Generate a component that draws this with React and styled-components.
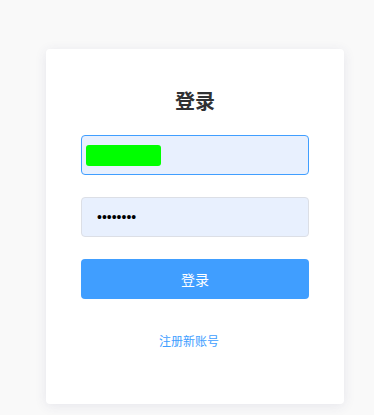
import React from "react";
import styled, { createGlobalStyle } from "styled-components";

const GlobalStyle = createGlobalStyle`
    html, body {
        margin: 0;
        padding: 0;
        background: #f9f9f9;
        font-family: "Noto Sans CJK SC", "Noto Sans", "Liberation Sans", sans-serif;
    }
`

export const Page = styled.div`
    width: 374px;
    height: 415px;
    padding: 49px 0 0 46px;
    box-sizing: border-box;
    overflow: hidden;
`

export const Card = styled.div`
    width: 298px;
    height: 355px;
    box-sizing: border-box;
    padding: 38px 35px 0 35px;
    background: #fff;
    border-radius: 4px;
    box-shadow: 0 2px 12px rgba(60, 60, 120, 0.1);
    display: flex;
    flex-direction: column;
`

export const Title = styled.h2`
    margin: 0 0 20px 0;
    font-size: 20px;
    line-height: 28px;
    font-weight: bold;
    color: #303133;
    text-align: center;
`

export const Field = styled.div`
    position: relative;
    margin-bottom: ${props => props.gap}px;
`

export const Input = styled.input`
    width: 100%;
    height: 40px;
    box-sizing: border-box;
    padding: 0 15px;
    border: 1px solid ${props => props.focused ? "#409eff" : "#dcdfe6"};
    border-radius: 4px;
    background: #e8f0fe;
    font-size: 14px;
    color: #000;
    outline: none;
    font-family: "Liberation Sans", Arial, sans-serif;
`

export const Mask = styled.div`
    position: absolute;
    left: 5px;
    top: 10px;
    width: 75px;
    height: 21px;
    border-radius: 3px;
    background: #00ff00;
`

export const Button = styled.button`
    width: 100%;
    height: 40px;
    border: none;
    border-radius: 4px;
    background: #409eff;
    color: #fff;
    font-size: 14px;
    font-family: inherit;
    cursor: pointer;
`

export const Footer = styled.div`
    margin-top: 33px;
    padding-right: 12px;
    font-size: 12px;
    line-height: 17px;
    text-align: center;
`

export const Link = styled.a`
    color: #409eff;
    text-decoration: none;
`

export default class App extends React.Component {
    render() {
        return (
            <>
                <GlobalStyle />
                <Page>
                    <Card>
                        <Title>登录</Title>
                        <Field gap={22}>
                            <Input focused type="text" defaultValue="" />
                            <Mask />
                        </Field>
                        <Field gap={22}>
                            <Input type="password" defaultValue="12345678" />
                        </Field>
                        <Button>登录</Button>
                        <Footer>
                            <Link href="#">注册新账号</Link>
                        </Footer>
                    </Card>
                </Page>
            </>
        );
    }
}
